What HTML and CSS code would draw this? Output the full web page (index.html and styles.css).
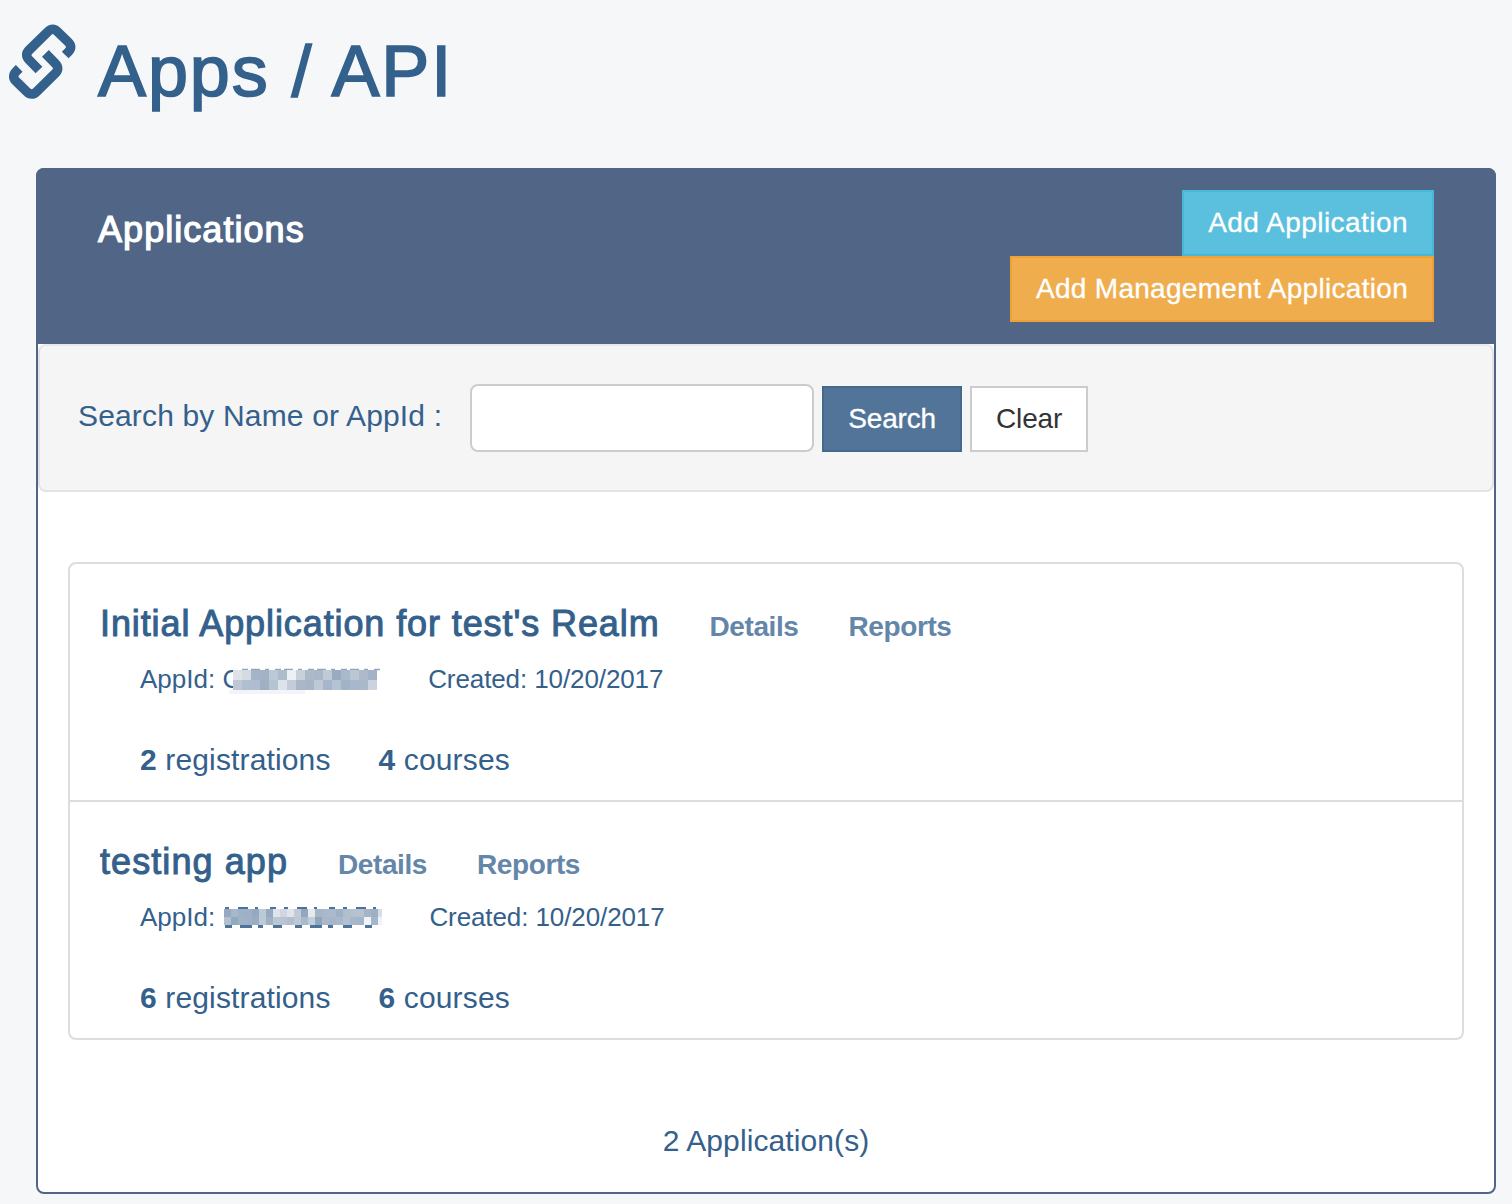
FILE: index.html
```html
<!DOCTYPE html>
<html lang="en">
<head>
<meta charset="utf-8">
<title>Apps / API</title>
<link rel="stylesheet" href="styles.css">
</head>
<body>
<header class="page-title">
  <svg class="logo" viewBox="0 0 70 76" width="70" height="76" aria-hidden="true">
    <path class="logo-stroke" d="M57.200 31 L60.200 28 Q65.200 23 60.200 18 L49.700 7.800 Q44.700 2.800 39.700 7.800 L21.200 26 Q16.200 31 21.200 36 L31 46" />
    <path class="logo-stroke" d="M11.200 44.400 L8.200 47.400 Q3.200 52.400 8.200 57.400 L18.700 67.600 Q23.700 72.600 28.700 67.600 L47.200 49.400 Q52.200 44.400 47.200 39.400 L37.400 29.400" />
  </svg>
  <h1>Apps / API</h1>
</header>
<section class="panel">
  <div class="panel-heading">
    <h2>Applications</h2>
    <div class="actions">
      <a class="btn btn-info">Add Application</a>
      <a class="btn btn-warning">Add Management Application</a>
    </div>
  </div>
  <form class="well">
    <label class="search-label">Search by Name or AppId :</label>
    <input class="search-input" type="text">
    <button class="btn btn-primary" type="button">Search</button>
    <button class="btn btn-default" type="button">Clear</button>
  </form>
  <div class="list">
    <article class="item">
      <div class="item-head">
        <h3>Initial Application for test's Realm</h3>
        <a class="link">Details</a>
        <a class="link">Reports</a>
      </div>
      <div class="meta">
        <span class="appid">AppId: C<svg class="blur blur-a" viewBox="0 0 151 30" width="151" height="30" aria-hidden="true">
          <path d="M13 2.500H151" stroke="#8fa6bf" stroke-width="1.500" stroke-dasharray="6 3 9 5 4 6"/>
          <g transform="translate(4 3)">
            <rect x="0" width="9" height="10" fill="#dde1e8"/><rect x="9" width="9" height="10" fill="#d5dae3"/><rect x="18" width="9" height="10" fill="#a6b4c7"/><rect x="27" width="9" height="10" fill="#a3b2c5"/><rect x="36" width="9" height="10" fill="#bcc8d5"/><rect x="45" width="9" height="10" fill="#aebcca"/><rect x="54" width="9" height="10" fill="#eef1f4"/><rect x="63" width="9" height="10" fill="#c8d1da"/><rect x="72" width="9" height="10" fill="#adb9ca"/><rect x="81" width="9" height="10" fill="#aab7c9"/><rect x="90" width="9" height="10" fill="#bfcad6"/><rect x="99" width="9" height="10" fill="#98abc1"/><rect x="108" width="9" height="10" fill="#a8b9cc"/><rect x="117" width="9" height="10" fill="#bac6d2"/><rect x="126" width="9" height="10" fill="#aebacb"/><rect x="135" width="9" height="10" fill="#a2b2c7"/>
            <rect x="0" y="10" width="9" height="10" fill="#bfc7d4"/><rect x="9" y="10" width="9" height="10" fill="#b0bfcf"/><rect x="18" y="10" width="9" height="10" fill="#aebdcf"/><rect x="27" y="10" width="9" height="10" fill="#9fb0c4"/><rect x="36" y="10" width="9" height="10" fill="#b5c4d3"/><rect x="45" y="10" width="9" height="10" fill="#dde3ea"/><rect x="54" y="10" width="9" height="10" fill="#c3ccd8"/><rect x="63" y="10" width="9" height="10" fill="#a9b7c8"/><rect x="72" y="10" width="9" height="10" fill="#a8b5c7"/><rect x="81" y="10" width="9" height="10" fill="#bcc9d6"/><rect x="90" y="10" width="9" height="10" fill="#a6b5c9"/><rect x="99" y="10" width="9" height="10" fill="#b3c3d2"/><rect x="108" y="10" width="9" height="10" fill="#a2b3c8"/><rect x="117" y="10" width="9" height="10" fill="#a7b8ca"/><rect x="126" y="10" width="9" height="10" fill="#abb8c9"/><rect x="135" y="10" width="9" height="10" fill="#cbd3de"/>
            <rect x="-4" y="20" width="76" height="4" fill="#f2f4f7"/>
          </g>
        </svg></span>
        <span class="created">Created: 10/20/2017</span>
      </div>
      <div class="counts"><span><b>2</b> registrations</span><span><b>4</b> courses</span></div>
    </article>
    <article class="item">
      <div class="item-head">
        <h3>testing app</h3>
        <a class="link">Details</a>
        <a class="link">Reports</a>
      </div>
      <div class="meta">
        <span class="appid">AppId: <svg class="blur blur-b" viewBox="0 0 158 30" width="158" height="30" aria-hidden="true">
          <path d="M1 3H155" stroke="#4d7399" stroke-width="2" stroke-dasharray="4 9 10 7 3 12 6 8"/>
          <path d="M1 21.500H150" stroke="#4d7399" stroke-width="3" stroke-dasharray="7 8 12 6 5 10 9 13"/>
          <g transform="translate(0 4)">
            <rect x="0" width="7" height="8" fill="#95a9bf"/><rect x="7" width="7" height="8" fill="#a8b8cb"/><rect x="14" width="7" height="8" fill="#9fb1c6"/><rect x="21" width="7" height="8" fill="#9fb0c5"/><rect x="28" width="7" height="8" fill="#96a9c0"/><rect x="35" width="7" height="8" fill="#bccad7"/><rect x="42" width="7" height="8" fill="#96a9c0"/><rect x="49" width="7" height="8" fill="#dfe4ea"/><rect x="56" width="7" height="8" fill="#d3d6df"/><rect x="63" width="7" height="8" fill="#e0e4ec"/><rect x="70" width="7" height="8" fill="#c5cad6"/><rect x="77" width="7" height="8" fill="#8fa8bf"/><rect x="84" width="7" height="8" fill="#e5eaef"/><rect x="91" width="7" height="8" fill="#a6b6c8"/><rect x="98" width="7" height="8" fill="#a9b9cb"/><rect x="105" width="7" height="8" fill="#aabaca"/><rect x="112" width="7" height="8" fill="#9fb1c7"/><rect x="119" width="7" height="8" fill="#b0bfce"/><rect x="126" width="7" height="8" fill="#b4c1d0"/><rect x="133" width="7" height="8" fill="#b7c3d1"/><rect x="140" width="7" height="8" fill="#a3b5c7"/><rect x="147" width="7" height="8" fill="#9cafc5"/><rect x="154" width="4" height="8" fill="#d6dde6"/>
            <rect x="0" y="8" width="7" height="8" fill="#b5c0cf"/><rect x="7" y="8" width="7" height="8" fill="#92aac1"/><rect x="14" y="8" width="7" height="8" fill="#a0b2c6"/><rect x="21" y="8" width="7" height="8" fill="#9fb1c6"/><rect x="28" y="8" width="7" height="8" fill="#98acc2"/><rect x="35" y="8" width="7" height="8" fill="#bccad6"/><rect x="42" y="8" width="7" height="8" fill="#9fb1c5"/><rect x="49" y="8" width="7" height="8" fill="#bdc7d4"/><rect x="56" y="8" width="7" height="8" fill="#b9c4d3"/><rect x="63" y="8" width="7" height="8" fill="#b3bfd0"/><rect x="70" y="8" width="7" height="8" fill="#bfc9d6"/><rect x="77" y="8" width="7" height="8" fill="#a9bbca"/><rect x="84" y="8" width="7" height="8" fill="#c3ced8"/><rect x="91" y="8" width="7" height="8" fill="#8fa6bf"/><rect x="98" y="8" width="7" height="8" fill="#a8b8ca"/><rect x="105" y="8" width="7" height="8" fill="#a6b6c8"/><rect x="112" y="8" width="7" height="8" fill="#a9b9cb"/><rect x="119" y="8" width="7" height="8" fill="#b2c1d1"/><rect x="126" y="8" width="7" height="8" fill="#a6b7cb"/><rect x="133" y="8" width="7" height="8" fill="#a3b5ca"/><rect x="140" y="8" width="7" height="8" fill="#f1f3f6"/><rect x="147" y="8" width="7" height="8" fill="#a5b6ca"/><rect x="154" y="8" width="4" height="8" fill="#f0f2f6"/>
          </g>
        </svg></span>
        <span class="created">Created: 10/20/2017</span>
      </div>
      <div class="counts"><span><b>6</b> registrations</span><span><b>6</b> courses</span></div>
    </article>
  </div>
  <p class="total">2 Application(s)</p>
</section>
</body>
</html>
```
FILE: styles.css
```css
* { box-sizing: border-box; }
html, body { margin: 0; }
body {
  background: #f6f7f9;
  color: #34608c;
  font-family: "Liberation Sans", Arial, sans-serif;
  font-size: 28px;
  height: 1204px;
  overflow: hidden;
}
.page-title {
  height: 168px;
  padding: 24px 0 0 8px;
  display: flex;
  align-items: flex-start;
  gap: 20px;
}
.logo { flex: none; }
.logo-stroke { fill: none; stroke: #34608c; stroke-width: 9.500; stroke-linejoin: round; }
h1 {
  margin: 1px 0 0;
  font-size: 72px;
  font-weight: 400;
  line-height: 92px;
  letter-spacing: 1.9px;
  -webkit-text-stroke: 1.7px #34608c;
  color: #34608c;
}
.panel {
  margin: 0 16px 0 36px;
  height: 1026px;
  border: 2px solid #516686;
  border-radius: 8px;
  background: #fff;
}
.panel-heading {
  height: 176px;
  margin: -2px -2px 0;
  padding: 22px 62px 0 62px;
  background: #516686;
  border-radius: 8px 8px 0 0;
  display: flex;
  justify-content: space-between;
  align-items: flex-start;
  color: #fff;
}
h2 {
  margin: 20px 0 0;
  font-size: 36px;
  line-height: 40px;
  font-weight: 400;
  letter-spacing: 1.05px;
  -webkit-text-stroke: 1.2px #fff;
  color: #fff;
}
.actions { display: flex; flex-direction: column; align-items: flex-end; }
.btn {
  display: block;
  font-family: inherit;
  font-size: 28px;
  line-height: 40px;
  height: 66px;
  padding: 11px 24px;
  border: 2px solid transparent;
  color: #fff;
}
.btn-info { background: #5bc0de; border-color: #46b8da; letter-spacing: 0.45px; -webkit-text-stroke: 0.3px #fff; }
.btn-warning { background: #f0ad4e; border-color: #eea236; letter-spacing: 0.3px; -webkit-text-stroke: 0.3px #fff; }
.btn-primary { background: #527499; border-color: #46688c; letter-spacing: -0.15px; -webkit-text-stroke: 0.3px #fff; }
.btn-default { background: #fff; border-color: #ccc; color: #333; letter-spacing: -0.15px; }
.well {
  height: 148px;
  margin: 0;
  padding: 38px 38px;
  background: #f5f5f5;
  border: 2px solid #e3e3e3;
  border-top-color: #e8e8e8;
  border-radius: 8px;
  display: flex;
  align-items: flex-start;
}
.search-label { margin: 12px 28px 0 0; line-height: 40px; font-size: 30px; letter-spacing: 0.16px; }
.search-input {
  width: 344px;
  height: 68px;
  margin-right: 8px;
  background: #fff;
  border: 2px solid #ccc;
  border-radius: 8px;
}
.well .btn { margin: 2px 8px 0 0; }
.list {
  margin: 70px 30px 0;
  border: 2px solid #ddd;
  border-radius: 8px;
}
.item { height: 236px; padding: 35px 30px 0; }
.item + .item { border-top: 2px solid #ddd; height: 238px; }
.item-head { display: flex; align-items: baseline; gap: 50px; height: 50px; }
h3 {
  margin: 0;
  font-size: 36px;
  line-height: 50px;
  font-weight: 400;
  letter-spacing: 0.9px;
  -webkit-text-stroke: 1px #34608c;
  color: #34608c;
}
.item + .item h3 { letter-spacing: 1.08px; }
.link { font-weight: 700; color: #6486a8; letter-spacing: -0.4px; }
.meta {
  display: flex;
  gap: 48px;
  padding-left: 40px;
  margin-top: 12px;
  font-size: 26px;
  line-height: 36px;
}
.created { letter-spacing: -0.1px; }
.appid { display: flex; align-items: center; white-space: pre; }
.blur { display: block; margin-top: 6px; }
.blur-a { margin-left: -12px; }
.blur-b { margin-left: 2px; margin-right: -1px; }
.counts {
  display: flex;
  gap: 48px;
  padding-left: 40px;
  margin-top: 43px;
  font-size: 30px;
  line-height: 40px;
  letter-spacing: 0.14px;
}
.total { margin: 81px 0 0; text-align: center; font-size: 30px; line-height: 40px; letter-spacing: 0.1px; }
```
